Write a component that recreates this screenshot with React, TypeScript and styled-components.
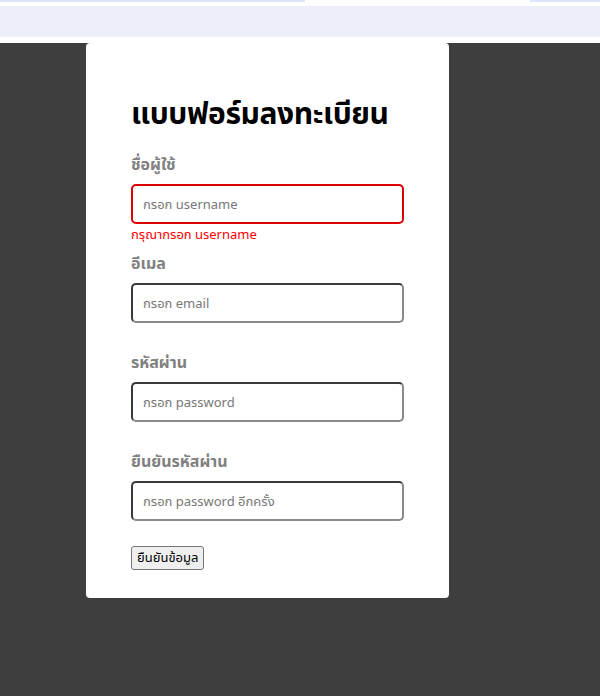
import React from 'react';
import styled, { createGlobalStyle } from 'styled-components';

const GlobalStyle = createGlobalStyle`
  html, body {
    margin: 0;
    padding: 0;
    background: #3e3e3e;
    font-family: 'Noto Sans', 'Noto Sans Thai', 'Liberation Sans', sans-serif;
  }
`;

const Page = styled.div`
  min-height: 696px;
  background: #3e3e3e;
`;

const TopBar = styled.div`
  height: 43px;
  background: #ffffff;
  display: flex;
  flex-direction: column;
`;

const TabStrip = styled.div`
  height: 2px;
  display: flex;
  justify-content: space-between;
`;

const Tab = styled.div<{ $w: number }>`
  width: ${(p) => p.$w}px;
  background: #dbe6fb;
`;

const Band = styled.div`
  margin-top: 4px;
  height: 31px;
  background: #eceff8;
`;

const Card = styled.div`
  margin-left: 86px;
  width: 363px;
  box-sizing: border-box;
  background: #ffffff;
  border-radius: 4px;
  padding: 52px 45px 28px 45px;
`;

const Title = styled.h1`
  margin: 0 0 21px 0;
  font-size: 30px;
  line-height: 36px;
  font-weight: 700;
  letter-spacing: -0.4px;
  color: #000;
`;

const Field = styled.div`
  display: flex;
  flex-direction: column;
  margin-bottom: 7px;
  &:last-of-type {
    margin-bottom: 5px;
  }
`;

const Label = styled.label`
  font-size: 16px;
  line-height: 24px;
  font-weight: 700;
  color: #808080;
  margin-bottom: 8px;
`;

const Input = styled.input<{ $error?: boolean }>`
  width: 273px;
  height: 40px;
  box-sizing: border-box;
  padding: 0 10px;
  border-radius: 5px;
  border: 2px solid;
  border-color: ${(p) => (p.$error ? '#e00000' : '#3a3a3a #8a8a8a #8a8a8a #3a3a3a')};
  font-family: inherit;
  font-size: 13px;
  outline: none;
  &::placeholder {
    color: #777;
  }
`;

const ErrorText = styled.div`
  height: 20px;
  font-size: 13px;
  line-height: 20px;
  color: #ff0000;
`;

const Submit = styled.button`
  display: block;
  height: 24px;
  padding: 0 5px;
  font-family: inherit;
  font-size: 13px;
  color: #000;
  background: #efefef;
  border: 1px solid #767676;
  border-radius: 3px;
`;

const fields = [
  { label: 'ชื่อผู้ใช้', placeholder: 'กรอก username', error: 'กรุณากรอก username' },
  { label: 'อีเมล', placeholder: 'กรอก email' },
  { label: 'รหัสผ่าน', placeholder: 'กรอก password' },
  { label: 'ยืนยันรหัสผ่าน', placeholder: 'กรอก password อีกครั้ง' },
];

export default function App() {
  return (
    <Page>
      <GlobalStyle />
      <TopBar>
        <TabStrip>
          <Tab $w={305} />
          <Tab $w={70} />
        </TabStrip>
        <Band />
      </TopBar>
      <Card>
        <Title>แบบฟอร์มลงทะเบียน</Title>
        {fields.map((f) => (
          <Field key={f.label}>
            <Label>{f.label}</Label>
            <Input placeholder={f.placeholder} $error={!!f.error} />
            <ErrorText>{f.error}</ErrorText>
          </Field>
        ))}
        <Submit>ยืนยันข้อมูล</Submit>
      </Card>
    </Page>
  );
}
